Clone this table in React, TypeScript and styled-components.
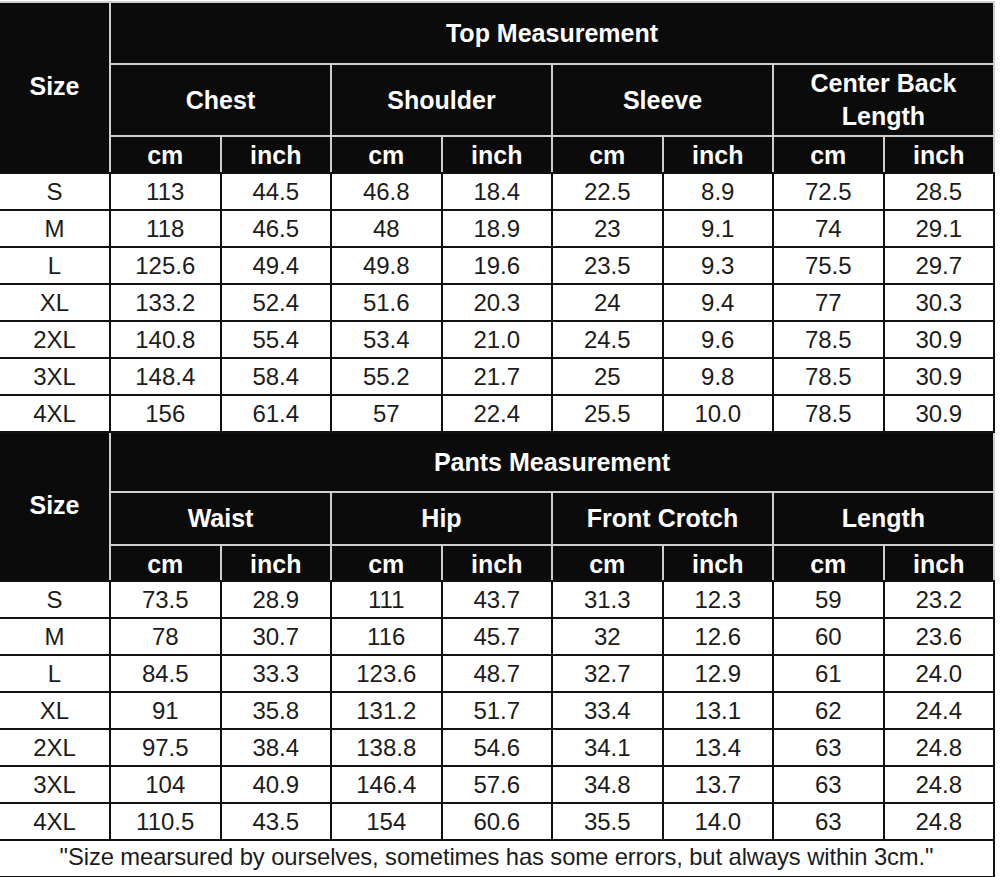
import { Fragment } from "react";
import { createGlobalStyle, styled } from "styled-components";

type Row = [string, ...string[]];

const topGroups = ["Chest", "Shoulder", "Sleeve", "Center Back Length"];
const topRows: Row[] = [
  ["S", "113", "44.5", "46.8", "18.4", "22.5", "8.9", "72.5", "28.5"],
  ["M", "118", "46.5", "48", "18.9", "23", "9.1", "74", "29.1"],
  ["L", "125.6", "49.4", "49.8", "19.6", "23.5", "9.3", "75.5", "29.7"],
  ["XL", "133.2", "52.4", "51.6", "20.3", "24", "9.4", "77", "30.3"],
  ["2XL", "140.8", "55.4", "53.4", "21.0", "24.5", "9.6", "78.5", "30.9"],
  ["3XL", "148.4", "58.4", "55.2", "21.7", "25", "9.8", "78.5", "30.9"],
  ["4XL", "156", "61.4", "57", "22.4", "25.5", "10.0", "78.5", "30.9"],
];

const pantsGroups = ["Waist", "Hip", "Front Crotch", "Length"];
const pantsRows: Row[] = [
  ["S", "73.5", "28.9", "111", "43.7", "31.3", "12.3", "59", "23.2"],
  ["M", "78", "30.7", "116", "45.7", "32", "12.6", "60", "23.6"],
  ["L", "84.5", "33.3", "123.6", "48.7", "32.7", "12.9", "61", "24.0"],
  ["XL", "91", "35.8", "131.2", "51.7", "33.4", "13.1", "62", "24.4"],
  ["2XL", "97.5", "38.4", "138.8", "54.6", "34.1", "13.4", "63", "24.8"],
  ["3XL", "104", "40.9", "146.4", "57.6", "34.8", "13.7", "63", "24.8"],
  ["4XL", "110.5", "43.5", "154", "60.6", "35.5", "14.0", "63", "24.8"],
];

export default function App() {
  return (
    <>
      <GlobalStyle />
      <Sheet>
        <SizeTable
          title="Top Measurement"
          groups={topGroups}
          rows={topRows}
          rowHeights="60px 70px 35px"
          first
        />
        <SizeTable
          title="Pants Measurement"
          groups={pantsGroups}
          rows={pantsRows}
          rowHeights="58px 51px 34px"
          footer={`"Size mearsured by ourselves, sometimes has some errors, but always within 3cm."`}
        />
      </Sheet>
    </>
  );
}

function SizeTable({
  title,
  groups,
  rows,
  rowHeights,
  first,
  footer,
}: {
  title: string;
  groups: string[];
  rows: Row[];
  rowHeights: string;
  first?: boolean;
  footer?: string;
}) {
  return (
    <>
      <Head $rows={rowHeights} $first={first}>
        <SizeHead>Size</SizeHead>
        <TitleCell>{title}</TitleCell>
        {groups.map((g) => (
          <GroupCell key={g}>{g}</GroupCell>
        ))}
        {groups.map((g) => (
          <Fragment key={g}>
            <UnitCell>cm</UnitCell>
            <UnitCell>inch</UnitCell>
          </Fragment>
        ))}
      </Head>
      <Body>
        {rows.map((row) =>
          row.map((v, i) => <DataCell key={row[0] + i}>{v}</DataCell>)
        )}
        {footer && <FooterCell>{footer}</FooterCell>}
      </Body>
    </>
  );
}

const GlobalStyle = createGlobalStyle`
  html, body {
    margin: 0;
    padding: 0;
    background: #ffffff;
  }
  body {
    font-family: "Liberation Sans", Arial, sans-serif;
  }
`;

const Sheet = styled.div`
  width: 995px;
  padding-top: 1px;
  display: flex;
  flex-direction: column;
`;

const columns = "109px repeat(8, 1fr)";

const Head = styled.div<{ $rows: string; $first?: boolean }>`
  display: grid;
  grid-template-columns: ${columns};
  grid-template-rows: ${(p) => p.$rows};
  gap: 2px;
  padding: ${(p) => (p.$first ? "2px" : "0")} 2px 0 0;
  background: #cfcfcf;
`;

const HeadCell = styled.div`
  background: #0b0b0b;
  color: #ffffff;
  font-weight: 700;
  font-size: 25px;
  line-height: 33px;
  display: flex;
  align-items: center;
  justify-content: center;
  text-align: center;
`;

const SizeHead = styled(HeadCell)`
  grid-row: 1 / 4;
  grid-column: 1;
  padding-bottom: 2px;
`;

const TitleCell = styled(HeadCell)`
  grid-column: 2 / 10;
`;

const GroupCell = styled(HeadCell)`
  grid-column: span 2;
  padding: 0 12px;
`;

const UnitCell = styled(HeadCell)`
  padding-top: 2px;
`;

const Body = styled.div`
  display: grid;
  grid-template-columns: ${columns};
  grid-auto-rows: 35px;
  gap: 2px;
  padding: 2px 2px 2px 0;
  background: #111111;
`;

const DataCell = styled.div`
  background: #ffffff;
  color: #1c1c1c;
  font-size: 24px;
  padding-top: 1px;
  display: flex;
  align-items: center;
  justify-content: center;
`;

const FooterCell = styled(DataCell)`
  grid-column: 1 / 10;
  font-size: 23.8px;
  letter-spacing: -0.1px;
  padding: 0 0 3px;
`;
